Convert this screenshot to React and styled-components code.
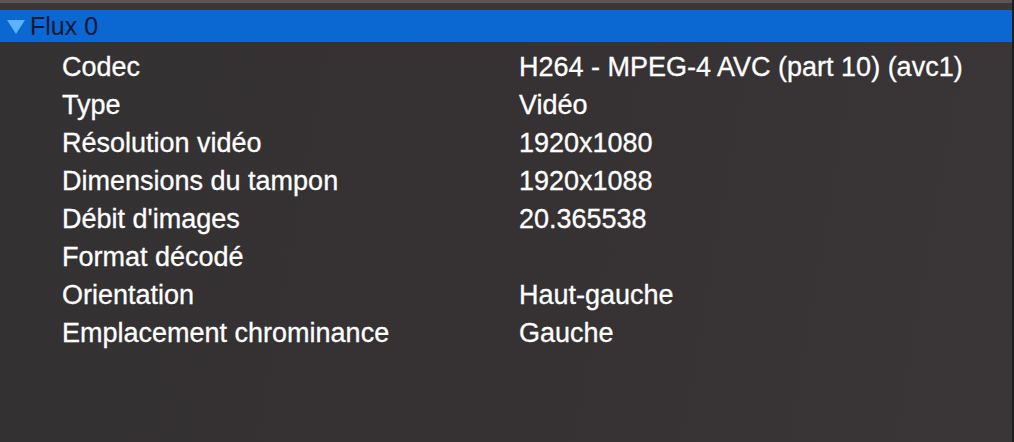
import React from "react";
import styled, { createGlobalStyle } from "styled-components";

const Global = createGlobalStyle`
  html, body { margin: 0; padding: 0; background: #363233; }
  body { width: 1014px; height: 442px; overflow: hidden; font-family: "Liberation Sans", Arial, sans-serif; }
`;

const Window = styled.div`
  width: 1014px;
  height: 442px;
  display: flex;
  flex-direction: column;
  background: linear-gradient(100deg, #343132 0%, #363233 55%, #3a3637 100%);
  border-right: 2px solid #1f1d1e;
  box-sizing: border-box;
`;

const TopStrip = styled.div`
  height: 3px;
  background: #5b5558;
  flex: none;
`;

const Gap = styled.div`
  height: 7px;
  background: #3b3638;
  flex: none;
`;

const Header = styled.div`
  height: 32px;
  flex: none;
  background: #0b67d1;
  display: flex;
  align-items: center;
  gap: 5px;
  padding-left: 7px;
  color: #0c1833;
  font-size: 25px;
  line-height: 32px;
`;

const Triangle = styled.svg`
  width: 18px;
  height: 14px;
  flex: none;
  margin-top: 1px;
`;

const Rows = styled.div`
  display: grid;
  grid-template-columns: 457px auto;
  grid-auto-rows: 38px;
  padding: 6px 0 0 62px;
`;

const Cell = styled.div`
  color: #ffffff;
  font-size: 27px;
  line-height: 38px;
  white-space: nowrap;
  -webkit-text-stroke: 0.3px #ffffff;
`;

const data = [
  ["Codec", "H264 - MPEG-4 AVC (part 10) (avc1)"],
  ["Type", "Vidéo"],
  ["Résolution vidéo", "1920x1080"],
  ["Dimensions du tampon", "1920x1088"],
  ["Débit d'images", "20.365538"],
  ["Format décodé", ""],
  ["Orientation", "Haut-gauche"],
  ["Emplacement chrominance", "Gauche"],
];

export default function App() {
  return (
    <>
      <Global />
      <Window>
        <TopStrip />
        <Gap />
        <Header>
          <Triangle viewBox="0 0 18 14">
            <polygon points="0,0 18,0 9,14" fill="#5cb2f7" />
          </Triangle>
          <span>Flux 0</span>
        </Header>
        <Rows>
          {data.map(([k, v]) => (
            <React.Fragment key={k}>
              <Cell>{k}</Cell>
              <Cell>{v}</Cell>
            </React.Fragment>
          ))}
        </Rows>
      </Window>
    </>
  );
}
